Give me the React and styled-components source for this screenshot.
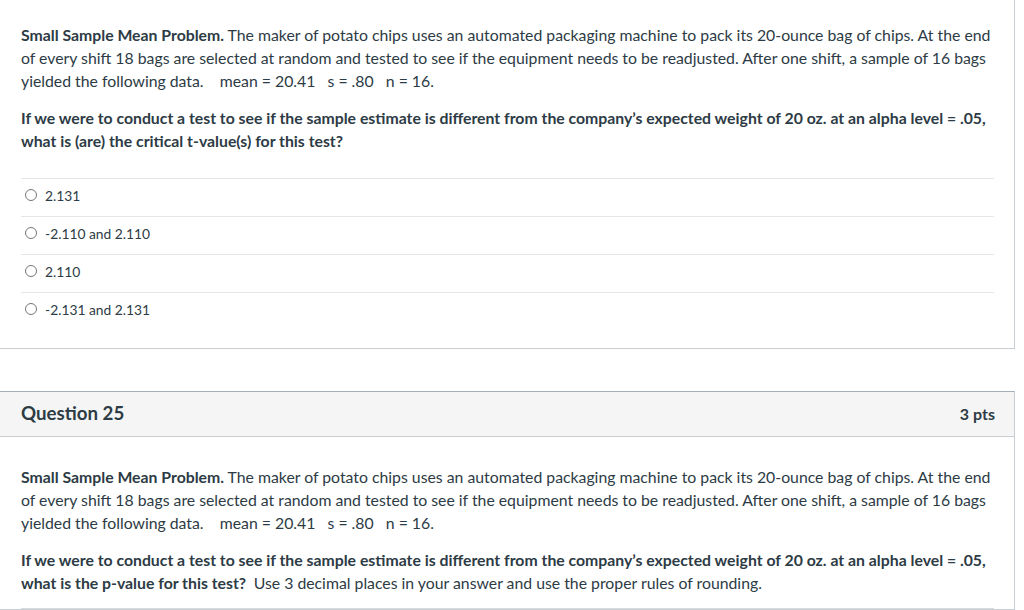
import React from "react";
import styled, { createGlobalStyle } from "styled-components";

const Global = createGlobalStyle`
  html, body { margin: 0; padding: 0; background: #fff; }
  body {
    font-family: Lato, "Open Sans", "Liberation Sans", sans-serif;
    color: #2d3b45;
    overflow: hidden;
  }
`;

const Page = styled.div`
  width: 1024px;
  height: 610px;
  overflow: hidden;
`;

const Card = styled.section`
  width: 1016px;
  margin-left: -1px;
  box-sizing: border-box;
  border: 1px solid #c7cdd1;
  border-top: ${(p) => (p.$cutTop ? "none" : "1px solid #a5afb5")};
  background: #fff;
  margin-bottom: ${(p) => p.$gap || 0}px;
`;

const Header = styled.header`
  display: flex;
  align-items: center;
  justify-content: space-between;
  height: 45px;
  box-sizing: border-box;
  padding: 0 19px 2px 21px;
  background: #f5f5f5;
  border-bottom: 1px solid #c7cdd1;
`;

const Title = styled.h2`
  margin: 0;
  font-size: 18.7px;
  font-weight: 700;
`;

const Points = styled.span`
  font-size: 16px;
  font-weight: 700;
`;

const Body = styled.div`
  padding: ${(p) => p.$top}px 20px 0 21px;
`;

const Para = styled.p`
  margin: 0 0 14px;
  font-size: 15.8px;
  line-height: 23px;
  font-weight: ${(p) => (p.$bold ? 700 : 400)};
  &:last-child { margin-bottom: 0; }
`;

const Bold = styled.strong`
  font-weight: 700;
`;

const Normal = styled.span`
  font-weight: 400;
`;

const Answers = styled.div`
  margin-top: 26px;
  padding-bottom: 18px;
`;

const Answer = styled.label`
  display: flex;
  align-items: center;
  gap: 8px;
  height: 38px;
  padding: 0 0 5px 4px;
  border-top: 1px solid #e4e6e8;
  font-size: 13.8px;
  color: #2d3b45;
  box-sizing: border-box;
`;

const Radio = styled.span`
  width: 10px;
  height: 10px;
  border: 1px solid #777;
  border-radius: 50%;
  background: #fff;
  flex: none;
`;

const BottomRule = styled.div`
  margin-top: 13px;
  border-top: 1px solid #d7dadd;
`;

const problem = (
  <Para>
    <Bold>Small Sample Mean Problem.</Bold> The maker of potato chips uses an
    automated packaging machine to pack its 20-ounce bag of chips. At the end
    of every shift 18 bags are selected at random and tested to see if the
    equipment needs to be readjusted. After one shift, a sample of 16 bags
    yielded the following data.{"\u00a0\u00a0\u00a0 mean = 20.41\u00a0\u00a0 s = .80\u00a0\u00a0 n = 16."}
  </Para>
);

const options = ["2.131", "-2.110 and 2.110", "2.110", "-2.131 and 2.131"];

export default function App() {
  return (
    <Page>
      <Global />
      <Card $cutTop $gap={42}>
        <Body $top={23}>
          {problem}
          <Para $bold>
            If we were to conduct a test to see if the sample estimate is
            different from the company’s expected weight of 20 oz. at an alpha
            level = .05, what is (are) the critical t-value(s) for this test?
          </Para>
          <Answers>
            {options.map((o) => (
              <Answer key={o}>
                <Radio />
                {o}
              </Answer>
            ))}
          </Answers>
        </Body>
      </Card>
      <Card>
        <Header>
          <Title>Question 25</Title>
          <Points>3 pts</Points>
        </Header>
        <Body $top={28}>
          {problem}
          <Para $bold>
            If we were to conduct a test to see if the sample estimate is
            different from the company’s expected weight of 20 oz. at an alpha
            level = .05, what is the p-value for this test?{"\u00a0 "}
            <Normal>
              Use 3 decimal places in your answer and use the proper rules of
              rounding.
            </Normal>
          </Para>
          <BottomRule />
        </Body>
      </Card>
    </Page>
  );
}
